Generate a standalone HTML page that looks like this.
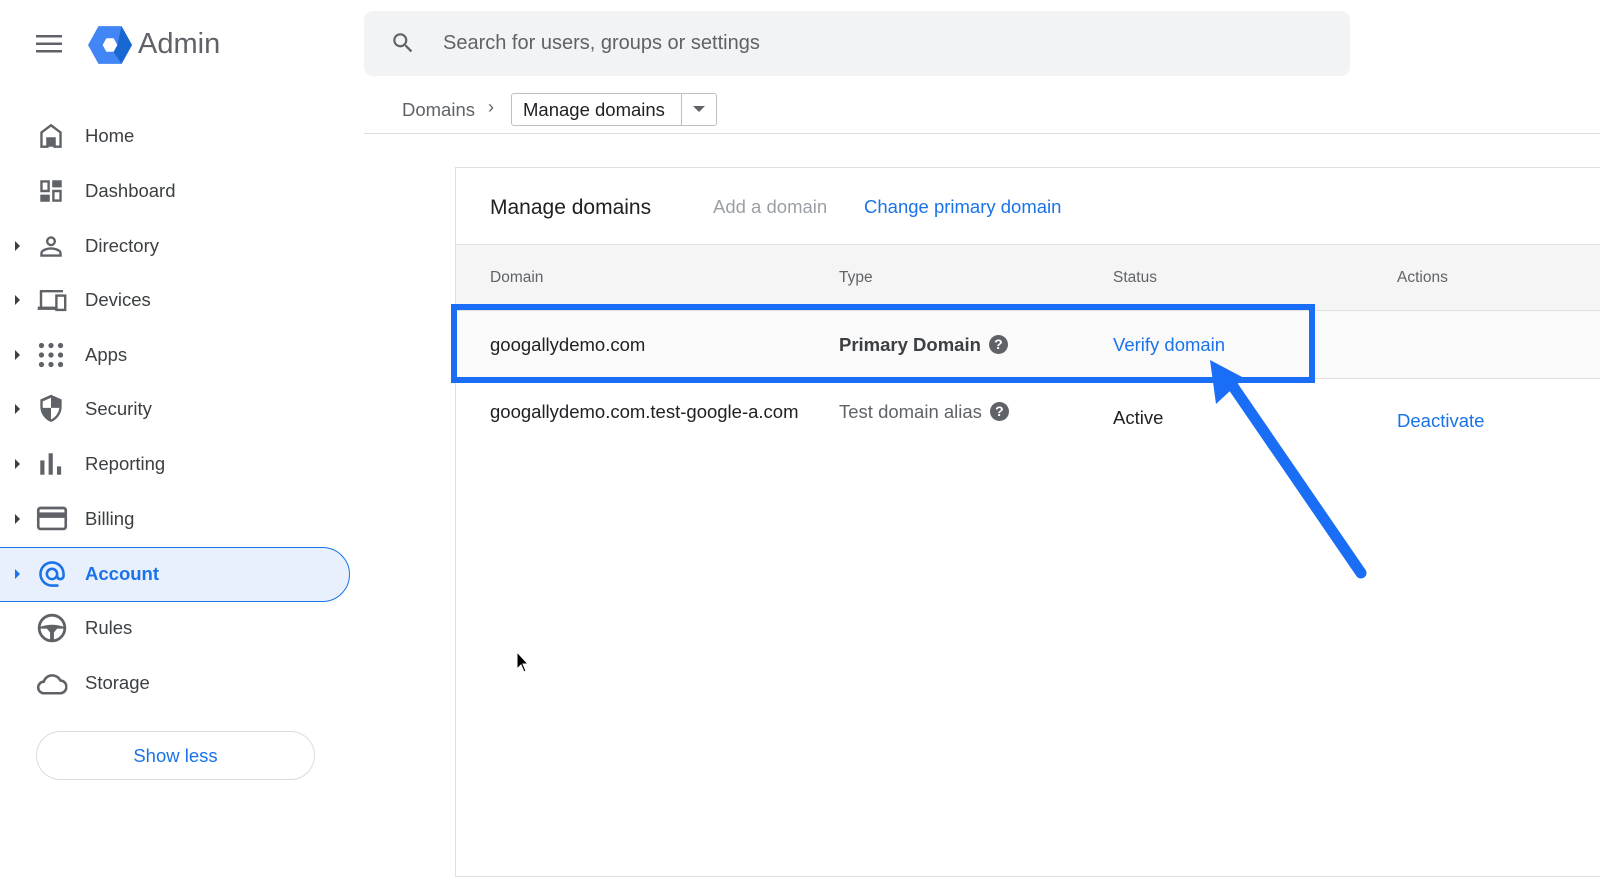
<!DOCTYPE html>
<html><head><meta charset="utf-8"><style>
*{margin:0;padding:0;box-sizing:border-box}
body{width:1600px;height:869px;background:#fff;font-family:"Liberation Sans",Arial,sans-serif;position:relative;overflow:hidden;color:#202124}
.a{position:absolute;white-space:nowrap}
.nav{position:absolute;left:0;width:350px;height:54px}
.nav .t{position:absolute;left:85px;top:50%;transform:translateY(-50%);font-size:18.5px;color:#3c4043}
.nav svg{position:absolute;left:38px;top:50%;transform:translateY(-50%) scale(1.1);transform-origin:center}
.nav .tri{position:absolute;left:15px;top:50%;margin-top:-5px;width:0;height:0;border-top:5px solid transparent;border-bottom:5px solid transparent;border-left:5px solid #3c4043}
.hdr{font-size:15.5px;color:#5f6368}
.cell{font-size:18.5px}
.q{display:inline-block;width:19px;height:19px;border-radius:50%;background:#5f6368;color:#fff;font-size:14px;font-weight:bold;text-align:center;line-height:19px;vertical-align:2px;margin-left:8px}
</style></head><body>
<svg class="a" style="left:36px;top:34px" width="26" height="20"><rect y="1" width="26" height="2.5" fill="#5f6368"/><rect y="8.5" width="26" height="2.5" fill="#5f6368"/><rect y="16" width="26" height="2.5" fill="#5f6368"/></svg>
<svg class="a" style="left:88px;top:25px" width="44" height="40" viewBox="0 0 42 38"><polygon points="10,1 32,1 42,19 32,37 10,37 0,19" fill="#4285f4"/><polygon points="32,1 42,19 32,37 24,25 28,19" fill="#1967d2"/><polygon points="14,19 17.5,12.5 24.5,12.5 28,19 24.5,25.5 17.5,25.5" fill="#fff"/></svg>
<div class="a" style="left:138px;top:28px;font-size:29px;color:#5f6368">Admin</div>
<div class="a" style="left:364px;top:11px;width:986px;height:65px;background:#f1f3f4;border-radius:9px"></div>
<svg class="a" style="left:390px;top:30px" width="26" height="26" viewBox="0 0 24 24"><path d="M15.5 14h-.79l-.28-.27A6.470 6.470 0 0016 9.5 6.5 6.5 0 109.5 16c1.61 0 3.090-.59 4.23-1.57l.27.28v.79l5 4.99L20.490 19l-4.990-5zm-6 0C7.010 14 5 11.990 5 9.5S7.010 5 9.5 5 14 7.010 14 9.5 11.990 14 9.5 14z" fill="#5f6368"/></svg>
<div class="a" style="left:443px;top:32px;font-size:20px;color:#5f6368">Search for users, groups or settings</div>
<div class="a" style="left:402px;top:99px;font-size:18.5px;color:#5f6368">Domains</div>
<div class="a" style="left:488px;top:97px;font-size:18px;color:#5f6368">&#8250;</div>
<div class="a" style="left:511px;top:93px;width:206px;height:33px;border:1px solid #bdc1c6;border-radius:3px"></div>
<div class="a" style="left:523px;top:99px;font-size:18.5px;color:#202124">Manage domains</div>
<div class="a" style="left:681px;top:94px;width:1px;height:31px;background:#bdc1c6"></div>
<div class="a" style="left:693px;top:106px;border-left:6px solid transparent;border-right:6px solid transparent;border-top:6px solid #5f6368"></div>
<div class="a" style="left:364px;top:133px;width:1236px;height:1px;background:#dadce0"></div>
<div class="nav" style="top:109px"><svg width="26" height="26" viewBox="0 0 24 24"><path d="M12 3L4 9v12h5v-7h6v7h5V9z" fill="none" stroke="#5f6368" stroke-width="2"/><rect x="9" y="14" width="6" height="7" fill="#5f6368"/></svg><span class="t">Home</span></div>
<div class="nav" style="top:164px"><svg width="26" height="26" viewBox="0 0 24 24"><path d="M3 13h8V3H3v10zm0 8h8v-6H3v6zm10 0h8V11h-8v10zm0-18v6h8V3h-8z" fill="#5f6368"/><path d="M5 5h4v6H5zM15 13h4v6h-4z" fill="#fff"/></svg><span class="t">Dashboard</span></div>
<div class="nav" style="top:219px"><i class="tri"></i><svg width="26" height="26" viewBox="0 0 24 24"><circle cx="12" cy="8" r="3.2" fill="none" stroke="#5f6368" stroke-width="2"/><path d="M4 20v-2c0-2.500 5-4 8-4s8 1.500 8 4v2z" fill="none" stroke="#5f6368" stroke-width="2"/></svg><span class="t">Directory</span></div>
<div class="nav" style="top:273px"><i class="tri"></i><svg width="28" height="26" viewBox="0 0 28 24"><path d="M4 19V4h20" fill="none" stroke="#5f6368" stroke-width="2.2"/><rect x="1" y="18" width="17" height="3" fill="#5f6368"/><rect x="18" y="8" width="8" height="13" fill="none" stroke="#5f6368" stroke-width="2.2"/></svg><span class="t">Devices</span></div>
<div class="nav" style="top:328px"><i class="tri"></i><svg width="26" height="26" viewBox="0 0 24 24" fill="#5f6368"><circle cx="4" cy="4" r="2.2"/><circle cx="12" cy="4" r="2.2"/><circle cx="20" cy="4" r="2.2"/><circle cx="4" cy="12" r="2.2"/><circle cx="12" cy="12" r="2.2"/><circle cx="20" cy="12" r="2.2"/><circle cx="4" cy="20" r="2.2"/><circle cx="12" cy="20" r="2.2"/><circle cx="20" cy="20" r="2.2"/></svg><span class="t">Apps</span></div>
<div class="nav" style="top:382px"><i class="tri"></i><svg width="26" height="28" viewBox="0 0 24 26"><path d="M12 1L3 5v6c0 6 4 11 9 13 5-2 9-7 9-13V5z" fill="#5f6368"/><path d="M12 3.500v8.500H5V6.600zM12 12h7c-.6 4.500-3.500 8.300-7 9.800z" fill="#fff"/></svg><span class="t">Security</span></div>
<div class="nav" style="top:437px"><i class="tri"></i><svg width="26" height="26" viewBox="0 0 24 24" fill="#5f6368"><rect x="3" y="9" width="3.5" height="12"/><rect x="10" y="3" width="3.5" height="18"/><rect x="17" y="14" width="3.5" height="7"/></svg><span class="t">Reporting</span></div>
<div class="nav" style="top:492px"><i class="tri"></i><svg width="28" height="24" viewBox="0 0 28 24"><rect x="1.5" y="2" width="25" height="19" rx="2" fill="none" stroke="#5f6368" stroke-width="2.4"/><rect x="1.5" y="6" width="25" height="5" fill="#5f6368"/></svg><span class="t">Billing</span></div>
<div class="a" style="left:-2px;top:547px;width:352px;height:55px;background:#e8f0fe;border:1.5px solid #1a73e8;border-radius:0 28px 28px 0"></div>
<div class="nav" style="top:547px"><i class="tri" style="border-left-color:#1a73e8"></i><svg width="28" height="28" viewBox="0 0 24 24"><path d="M12 2a10 10 0 100 20h5v-2h-5a8 8 0 118-8v1.400c0 .8-.7 1.600-1.500 1.600s-1.500-.8-1.500-1.600V12a5 5 0 10-1.500 3.500 3.700 3.700 0 003 1.500c2 0 3.500-1.600 3.500-3.600V12A10 10 0 0012 2zm0 13a3 3 0 110-6 3 3 0 010 6z" fill="#1a73e8"/></svg><span class="t" style="color:#1a73e8;font-weight:bold">Account</span></div>
<div class="nav" style="top:601px"><svg width="28" height="28" viewBox="0 0 24 24"><circle cx="12" cy="12" r="10" fill="none" stroke="#5f6368" stroke-width="2.2"/><path d="M3 11c3-1 6-1.500 9-1.500s6 .5 9 1.500v1.500h-5l-2.500 3v6h-3v-6L8 12.500H3z" fill="#5f6368"/></svg><span class="t">Rules</span></div>
<div class="nav" style="top:656px"><svg width="28" height="24" viewBox="0 0 24 20"><path d="M6 18a4.500 4.500 0 01-.5-9A7 7 0 0118.500 8 5 5 0 0118 18z" fill="none" stroke="#5f6368" stroke-width="2"/></svg><span class="t">Storage</span></div>
<div class="a" style="left:36px;top:731px;width:279px;height:49px;border:1px solid #dadce0;border-radius:25px;text-align:center;line-height:47px;font-size:18.5px;color:#1a73e8">Show less</div>
<div class="a" style="left:455px;top:167px;width:1150px;height:710px;border:1px solid #e0e0e0"></div>
<div class="a" style="left:490px;top:196px;font-size:21px;color:#202124">Manage domains</div>
<div class="a" style="left:713px;top:196px;font-size:18.5px;color:#9aa0a6">Add a domain</div>
<div class="a" style="left:864px;top:196px;font-size:18.5px;color:#1a73e8">Change primary domain</div>
<div class="a" style="left:456px;top:244px;width:1144px;height:67px;background:#f5f5f5;border-top:1px solid #e0e0e0;border-bottom:1px solid #e0e0e0"></div>
<div class="a hdr" style="left:490px;top:269px">Domain</div>
<div class="a hdr" style="left:839px;top:269px">Type</div>
<div class="a hdr" style="left:1113px;top:269px">Status</div>
<div class="a hdr" style="left:1397px;top:269px">Actions</div>
<div class="a" style="left:456px;top:311px;width:1144px;height:68px;background:#fafafa;border-bottom:1px solid #e0e0e0"></div>
<div class="a cell" style="left:490px;top:334px">googallydemo.com</div>
<div class="a cell" style="left:839px;top:334px;font-weight:bold;color:#3c4043">Primary Domain<span class="q">?</span></div>
<div class="a cell" style="left:1113px;top:334px;color:#1a73e8">Verify domain</div>
<div class="a cell" style="left:490px;top:401px">googallydemo.com.test-google-a.com</div>
<div class="a cell" style="left:839px;top:401px;color:#5f6368">Test domain alias<span class="q">?</span></div>
<div class="a cell" style="left:1113px;top:407px">Active</div>
<div class="a cell" style="left:1397px;top:410px;color:#1a73e8">Deactivate</div>
<div class="a" style="left:451px;top:304px;width:864px;height:79px;border:6px solid #1a6ef5"></div>
<svg class="a" style="left:0;top:0" width="1600" height="869"><line x1="1361" y1="573" x2="1230" y2="382" stroke="#1a6ef5" stroke-width="11" stroke-linecap="round"/><polygon points="1210,360 1244,378 1216,404" fill="#1a6ef5"/><path d="M517 652v17l4-4 3 7 2-1-3-7h5z" fill="#000" stroke="#fff" stroke-width="1"/></svg>
</body></html>
